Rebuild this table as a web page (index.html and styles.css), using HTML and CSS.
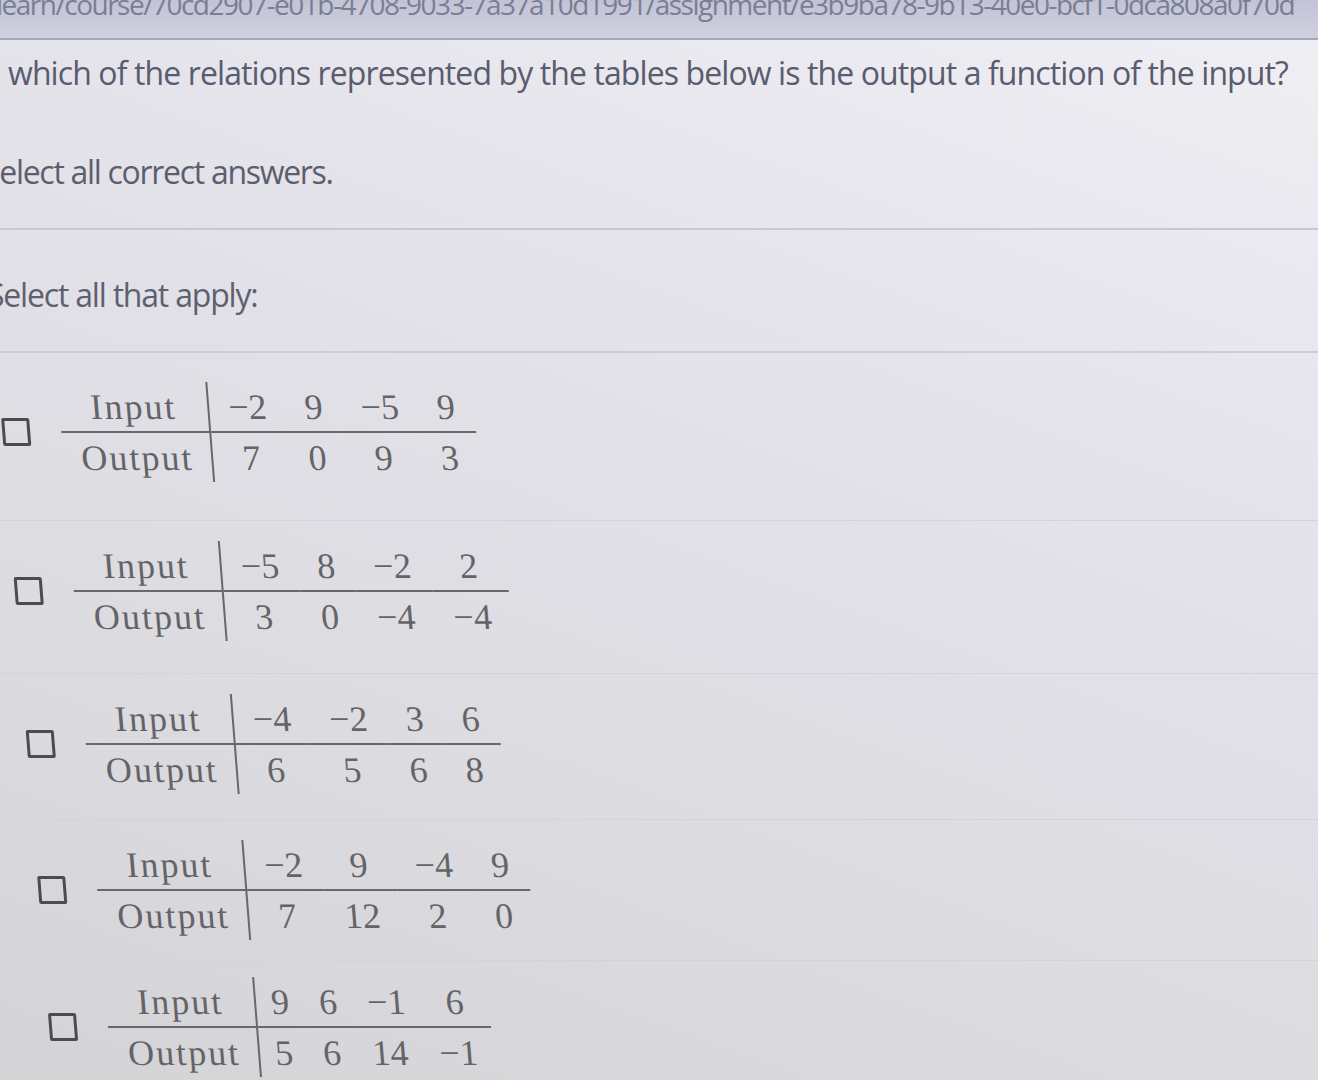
FILE: index.html
```html
<!DOCTYPE html>
<html lang="en">
<head>
<meta charset="utf-8">
<title>Functions from tables</title>
<link rel="stylesheet" href="styles.css">
</head>
<body>
<header class="urlbar">
  <div class="url">learn/course/70cd2907-e01b-4708-9033-7a37a10d1991/assignment/e3b9ba78-9b13-40e0-bcf1-0dca808a0f70d</div>
</header>
<main class="page">
  <p class="question">which of the relations represented by the tables below is the output a function of the input?</p>
  <p class="instruction">Select all correct answers.</p>
  <section class="prompt">
    <p class="apply">Select all that apply:</p>
  </section>
  <ul class="options">
    <li class="option">
      <span class="box"></span>
      <table class="rel">
        <tr><th>Input</th><td>−2</td><td>9</td><td>−5</td><td>9</td></tr>
        <tr><th>Output</th><td>7</td><td>0</td><td>9</td><td>3</td></tr>
      </table>
    </li>
    <li class="option">
      <span class="box"></span>
      <table class="rel">
        <tr><th>Input</th><td>−5</td><td>8</td><td>−2</td><td>2</td></tr>
        <tr><th>Output</th><td>3</td><td>0</td><td>−4</td><td>−4</td></tr>
      </table>
    </li>
    <li class="option">
      <span class="box"></span>
      <table class="rel">
        <tr><th>Input</th><td>−4</td><td>−2</td><td>3</td><td>6</td></tr>
        <tr><th>Output</th><td>6</td><td>5</td><td>6</td><td>8</td></tr>
      </table>
    </li>
    <li class="option">
      <span class="box"></span>
      <table class="rel">
        <tr><th>Input</th><td>−2</td><td>9</td><td>−4</td><td>9</td></tr>
        <tr><th>Output</th><td>7</td><td>12</td><td>2</td><td>0</td></tr>
      </table>
    </li>
    <li class="option">
      <span class="box"></span>
      <table class="rel compact">
        <tr><th>Input</th><td>9</td><td>6</td><td>−1</td><td>6</td></tr>
        <tr><th>Output</th><td>5</td><td>6</td><td>14</td><td>−1</td></tr>
      </table>
    </li>
  </ul>
</main>
</body>
</html>
```

FILE: styles.css
```css
* { box-sizing: border-box; }

html, body {
  margin: 0;
  padding: 0;
  height: 100%;
}

body {
  width: 1318px;
  height: 1080px;
  overflow: hidden;
  font-family: "Open Sans", "Noto Sans", sans-serif;
  color: #5b5e6e;
  background: linear-gradient(200deg, #efeff4 0%, #e4e3ea 35%, #dcdbe0 70%, #d4d3d6 100%);
}

.urlbar {
  height: 40px;
  overflow: hidden;
  background: linear-gradient(180deg, #c2c3d6 0%, #cfd0df 100%);
  border-bottom: 2px solid #a7a8b7;
}

.url {
  margin-top: -11px;
  margin-left: -4px;
  font-size: 28px;
  line-height: 30px;
  white-space: nowrap;
  letter-spacing: -1.5px;
  color: #7b7e93;
}

.page {
  display: flex;
  flex-direction: column;
}

.question {
  margin: 0;
  padding: 11px 0 0 8px;
  font-size: 32px;
  line-height: 44px;
  letter-spacing: -0.9px;
  white-space: nowrap;
  color: #595c6e;
}

.instruction {
  margin: 55px 0 0 -17px;
  padding-bottom: 34px;
  font-size: 32px;
  line-height: 44px;
  letter-spacing: -1.3px;
  color: #5b5e6e;
  border-bottom: 2px solid #c8c8d1;
}

.prompt {
  padding: 43px 0 34px;
  border-bottom: 2px solid #cdcdd5;
}

.apply {
  margin: 0 0 0 -13px;
  font-size: 32px;
  line-height: 44px;
  letter-spacing: -1.2px;
  color: #5d606f;
}

.options {
  list-style: none;
  margin: 0 0 0 -40px;
  padding: 0;
  width: 1420px;
  transform: skewX(4.5deg);
  transform-origin: 0 0;
}

.option {
  display: flex;
  align-items: center;
  gap: 31px;
  padding: 20px 0 32px 36px;
  border-bottom: 1px solid #d3d3dc;
}

.option:first-child {
  padding-top: 29px;
  padding-bottom: 38px;
}

.option:nth-child(3) {
  padding-bottom: 25px;
}

.option:nth-child(4) {
  padding-top: 20px;
  padding-bottom: 20px;
}

.option:nth-child(5) {
  padding-top: 16px;
}

.box {
  flex: none;
  width: 28px;
  height: 28px;
  border: 3px solid #4c4c50;
  border-radius: 2px;
}

.rel {
  border-collapse: collapse;
  font-family: "Liberation Serif", "DejaVu Serif", serif;
  font-size: 36px;
  color: #646468;
}

.rel th,
.rel td {
  height: 50px;
  padding: 0 19px;
  text-align: center;
  font-weight: normal;
  white-space: nowrap;
}

.rel.compact td {
  height: 47px;
  padding: 0 15px;
}

.rel th {
  padding: 0 18px;
  letter-spacing: 2px;
  border-right: 2px solid #68686c;
}

.rel tr:first-child th,
.rel tr:first-child td {
  border-bottom: 2px solid #68686c;
}
```
